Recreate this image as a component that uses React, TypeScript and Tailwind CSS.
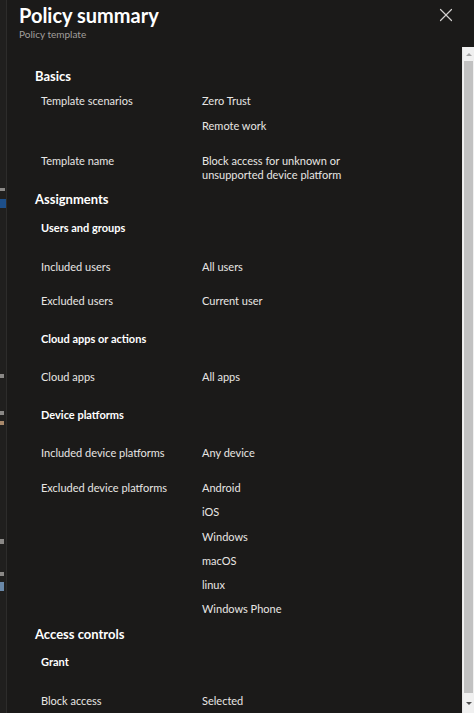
import { X } from 'lucide-react';

const font = { fontFamily: 'Lato, "Noto Sans", sans-serif' };

const platforms = ['Android', 'iOS', 'Windows', 'macOS', 'linux', 'Windows Phone'];

function Row({ label, children, className = '' }: { label: string; children: React.ReactNode; className?: string }) {
    return (
        <div className={`flex pl-[34px] text-[11px] leading-[16px] text-[#e8e6e4] ${className}`}>
            <div className="w-[161px] shrink-0">{label}</div>
            <div className="flex-1">{children}</div>
        </div>
    );
}

export default function App() {
    return (
        <div className="flex h-[713px] w-[474px] overflow-hidden bg-[#1b1a19]" style={font}>
            {/* edge of the page behind the panel */}
            <div className="flex w-[7px] shrink-0 flex-col border-r border-[#2d2c2b] bg-[#201f1e]">
                <div className="mt-[188px] h-[3px] w-[5px] bg-[#8a8886]" />
                <div className="mt-[8px] h-[9px] w-[6px] bg-[#1d4f8a]" />
                <div className="mt-[166px] h-[4px] w-[4px] bg-[#8a8886]" />
                <div className="mt-[33px] h-[4px] w-[4px] bg-[#8a8886]" />
                <div className="mt-[6px] h-[4px] w-[4px] bg-[#a8886a]" />
                <div className="mt-[114px] h-[5px] w-[4px] bg-[#8a8886]" />
                <div className="mt-[28px] h-[4px] w-[4px] bg-[#8a8886]" />
                <div className="mt-[6px] h-[9px] w-[4px] bg-[#6a88a8]" />
            </div>

            <div className="flex min-w-0 flex-1 flex-col">
                {/* header */}
                <div className="flex h-[47px] items-start justify-between pl-[12px] pr-[17px]">
                    <div>
                        <h1 className="mt-[3px] text-[20px] font-bold leading-[24px] text-white">Policy summary</h1>
                        <p className="text-[10px] leading-[14px] text-[#a19f9d]">Policy template</p>
                    </div>
                    <X className="mt-[4px] h-[22px] w-[22px] text-[#d2d0ce]" strokeWidth={1.3} />
                </div>

                <div className="flex min-h-0 flex-1">
                    {/* summary content */}
                    <div className="flex-1 pt-[21px]">
                        <h2 className="pl-[28px] text-[13px] font-bold leading-[16px] text-white">Basics</h2>
                        <Row label="Template scenarios" className="mt-[9px]">
                            <div className="flex flex-col gap-[9px]">
                                <span>Zero Trust</span>
                                <span>Remote work</span>
                            </div>
                        </Row>
                        <Row label="Template name" className="mt-[19px]">
                            <div className="mt-[1px] leading-[14px]">
                                Block access for unknown or
                                <br />
                                unsupported device platform
                            </div>
                        </Row>

                        <h2 className="mt-[9px] pl-[28px] text-[13px] font-bold leading-[16px] text-white">Assignments</h2>
                        <h3 className="mt-[13px] pl-[34px] text-[11px] font-bold leading-[16px] text-white">Users and groups</h3>
                        <Row label="Included users" className="mt-[23px]">All users</Row>
                        <Row label="Excluded users" className="mt-[18px]">Current user</Row>

                        <h3 className="mt-[22px] pl-[34px] text-[11px] font-bold leading-[16px] text-white">Cloud apps or actions</h3>
                        <Row label="Cloud apps" className="mt-[22px]">All apps</Row>

                        <h3 className="mt-[22px] pl-[34px] text-[11px] font-bold leading-[16px] text-white">Device platforms</h3>
                        <Row label="Included device platforms" className="mt-[22px]">Any device</Row>
                        <Row label="Excluded device platforms" className="mt-[19px]">
                            <div className="flex flex-col gap-[8.25px]">
                                {platforms.map((p) => (
                                    <span key={p}>{p}</span>
                                ))}
                            </div>
                        </Row>

                        <h2 className="mt-[9px] pl-[28px] text-[13px] font-bold leading-[16px] text-white">Access controls</h2>
                        <h3 className="mt-[12px] pl-[34px] text-[11px] font-bold leading-[16px] text-white">Grant</h3>
                        <Row label="Block access" className="mt-[23px]">Selected</Row>
                    </div>

                    {/* scrollbar */}
                    <div className="flex w-[12px] shrink-0 flex-col border-l border-[#e8e8e8] bg-[#f0f0f0]">
                        <div className="flex h-[14px] items-center justify-center">
                            <div className="h-0 w-0 border-x-[3px] border-b-[3px] border-x-transparent border-b-[#a3a3a3]" />
                        </div>
                        <div className="mx-[1px] flex-1 bg-[#c1c1c1]" />
                        <div className="flex h-[20px] items-center justify-center">
                            <div className="h-0 w-0 border-x-[3px] border-t-[3px] border-x-transparent border-t-[#505050]" />
                        </div>
                    </div>
                </div>
            </div>
        </div>
    );
}
